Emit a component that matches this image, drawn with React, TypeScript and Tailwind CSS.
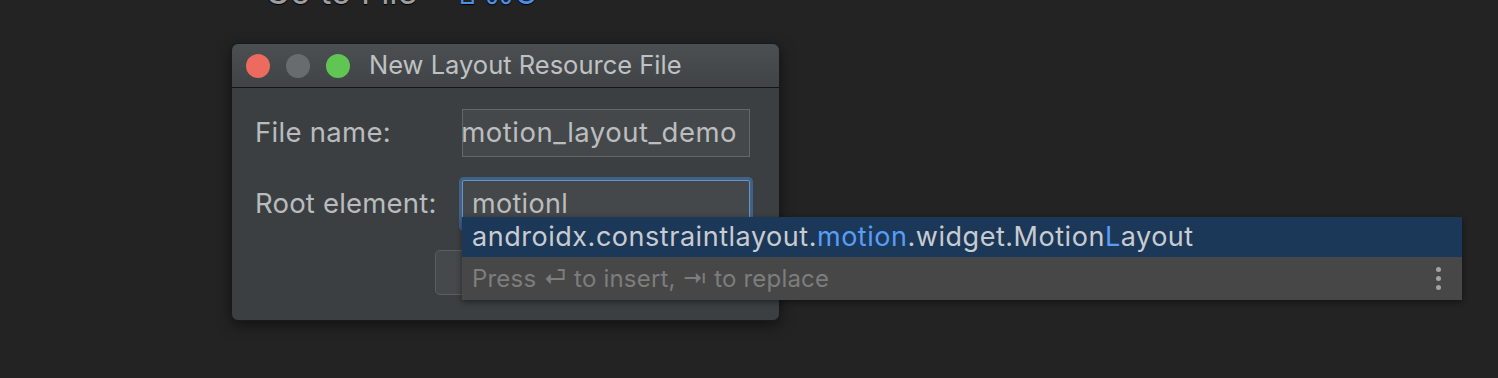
import React from "react";

const font = { fontFamily: "Inter, 'Noto Sans', sans-serif" };

function TrafficLights() {
  return (
    <div className="flex items-center gap-4">
      <span className="h-6 w-6 rounded-full bg-[#ed6a5e]" />
      <span className="h-6 w-6 rounded-full bg-[#696c6e]" />
      <span className="h-6 w-6 rounded-full bg-[#61c554]" />
    </div>
  );
}

function Completion() {
  return (
    <div className="absolute left-[230px] top-[173px] z-10 w-[1000px] shadow-[0_2px_6px_rgba(0,0,0,0.45)]">
      <div className="flex h-[40px] items-center whitespace-nowrap bg-[#1c3859] pl-[10px] text-[27px] tracking-[0.53px] text-[#c8ccd0]">
        <span>androidx.constraintlayout.</span>
        <span className="text-[#589df6]">motion</span>
        <span>.widget.Motion</span>
        <span className="text-[#589df6]">L</span>
        <span>ayout</span>
      </div>
      <div className="flex h-[43px] items-center justify-between bg-[#474747] pl-[10px] pr-[21px] text-[24px] tracking-[0.2px] text-[#7d7d7d]">
        <span className="whitespace-nowrap">Press ⏎ to insert, ⇥ to replace</span>
        <span className="flex flex-col gap-[4px]">
          <span className="h-[5px] w-[5px] rounded-full bg-[#a3a3a3]" />
          <span className="h-[5px] w-[5px] rounded-full bg-[#a3a3a3]" />
          <span className="h-[5px] w-[5px] rounded-full bg-[#a3a3a3]" />
        </span>
      </div>
    </div>
  );
}

export default function App() {
  return (
    <div className="h-[378px] w-[1498px] overflow-hidden bg-[#232323]" style={font}>
      {/* hint cut off at the top */}
      <div className="-mt-[29px] flex items-baseline gap-[34px] pl-[265px] text-[34px] leading-[42px] text-[#9e9e9e] [text-shadow:0_1px_1px_#000]">
        <span>Go to File</span>
        <span className="text-[31px] text-[#4e8fe6]">⇧⌘O</span>
      </div>

      <div className="relative ml-[231px] mt-[29px] h-[278px] w-[549px] rounded-[7px] border border-[#1a1a1a] bg-[#3c3f41] shadow-[0_4px_14px_rgba(0,0,0,0.5)]">
        <div className="flex h-[44px] items-center gap-[19px] rounded-t-[7px] border-b border-[#151515] bg-gradient-to-b from-[#4c4f51] to-[#414446] pl-[14px]">
          <TrafficLights />
          <span className="whitespace-nowrap text-[25.5px] text-[#bfc1c2]">New Layout Resource File</span>
        </div>

        <div className="flex flex-col gap-[23px] pl-[23px] pt-[21px]">
          <div className="flex items-center">
            <span className="w-[207px] whitespace-nowrap text-[27.5px] tracking-[0.3px] text-[#b9bcbe]">File name:</span>
            <div className="flex h-[48px] w-[288px] items-center justify-end overflow-hidden border border-[#646768] bg-[#45484a] pr-[12px] text-[27.5px] tracking-[0.5px] text-[#bbbdbf]">
              <span className="shrink-0 whitespace-nowrap">motion_layout_demo</span>
            </div>
          </div>
          <div className="flex items-center">
            <span className="w-[207px] whitespace-nowrap text-[27.5px] tracking-[0.2px] text-[#b9bcbe]">Root element:</span>
            <div className="flex h-[48px] w-[288px] items-center rounded-[2px] border border-[#6a93bd] bg-[#45484a] pl-[9px] text-[27px] tracking-[0.3px] text-[#bbbdbf] shadow-[0_0_0_3px_#3f6388]">
              motionl
            </div>
          </div>
          <div className="-mt-[1px] flex pl-[180px]">
            <div className="h-[45px] w-[140px] rounded-[5px] border border-[#5b5e60] bg-[#45494b]" />
          </div>
        </div>

        <Completion />
      </div>
    </div>
  );
}
